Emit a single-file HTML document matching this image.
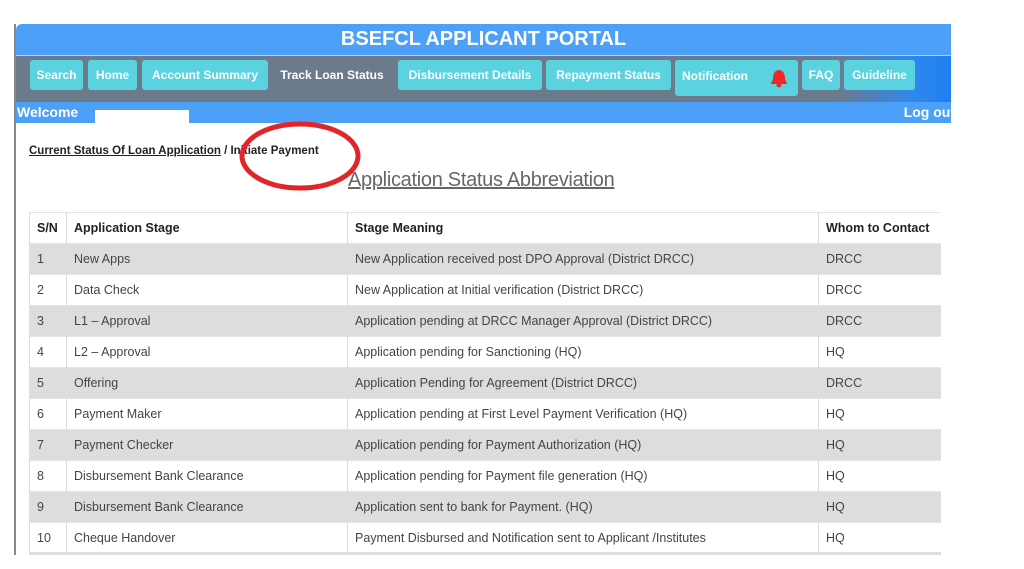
<!DOCTYPE html>
<html><head><meta charset="utf-8"><style>
*{margin:0;padding:0;box-sizing:border-box}
body{width:1024px;height:569px;background:#fff;position:relative;overflow:hidden;font-family:"Liberation Sans",Arial,sans-serif}
.a{position:absolute}
#lline{left:14px;top:24px;width:2px;height:531px;background:#888}
#hdr{left:16px;top:24px;width:935px;height:31px;background:#4da0f7;color:#fff;font:bold 20px "Liberation Sans",sans-serif;text-align:center;line-height:31px;border-top-left-radius:6px}
#nav{left:16px;top:55px;width:935px;height:47px;background:linear-gradient(90deg,#6c7b8c 0%,#6c7b8c 88%,#2f88ee 96%,#1f7ff0 100%);border-top:1px solid #ccd}
.b{position:absolute;top:60px;height:30px;background:#5ad2df;color:#fff;font:bold 12px "Liberation Sans",sans-serif;line-height:30px;text-align:center;border-radius:3px;white-space:nowrap}
#wel{left:16px;top:102px;width:935px;height:21px;background:#4da0f7;color:#fff;font:bold 14px "Liberation Sans",sans-serif;line-height:21px;padding-left:1px}
table{position:absolute;left:29px;top:212px;width:912px;border-collapse:collapse;font-size:12.5px;color:#444}
td,th{height:31px;padding:0 7px;text-align:left;border-left:1px solid #ddd;white-space:nowrap}
th{color:#222;font-size:12.5px}
tr:nth-child(even){background:#ddd}
tr{border-top:1px solid #e4e4e4}
</style></head><body>
<div class="a" id="lline"></div>
<div class="a" id="hdr">BSEFCL APPLICANT PORTAL</div>
<div class="a" id="nav"></div>
<div class="b" style="left:30px;width:53px">Search</div>
<div class="b" style="left:88px;width:49px">Home</div>
<div class="b" style="left:142px;width:126px">Account Summary</div>
<div class="b" style="left:272px;width:120px;background:none">Track Loan Status</div>
<div class="b" style="left:398px;width:144px">Disbursement Details</div>
<div class="b" style="left:546px;width:125px">Repayment Status</div>
<div class="b" style="left:675px;width:123px;height:36px;text-align:left;padding-left:7px;line-height:32px">Notification
<svg style="position:absolute;left:94px;top:8px" width="20" height="20" viewBox="0 0 20 20"><path d="M10 2C6 2 4 6 4 10C4 13 2 14 2 16H18C18 14 16 13 16 10C16 6 14 2 10 2Z" fill="#f02828"/><circle cx="10" cy="17" r="2.5" fill="#f02828"/></svg></div>
<div class="b" style="left:802px;width:38px">FAQ</div>
<div class="b" style="left:844px;width:71px">Guideline</div>
<div class="a" id="wel">Welcome<span style="position:absolute;left:79px;top:8px;width:94px;height:13px;background:#fff"></span><span style="position:absolute;right:-4px;top:0">Log out</span></div>
<div class="a" style="left:29px;top:145px;font:bold 11.5px 'Liberation Sans',sans-serif;color:#222"><u>Current Status Of Loan Application</u> / Initiate Payment</div>
<div class="a" style="left:348px;top:169px;font:20px 'Liberation Sans',sans-serif;color:#666;text-decoration:underline;letter-spacing:-0.3px">Application Status Abbreviation</div>
<svg class="a" style="left:238px;top:120px" width="130" height="74"><ellipse cx="62" cy="36" rx="58" ry="32" fill="none" stroke="#e0252b" stroke-width="5"/></svg>
<table>
<tr style="border-top:1px solid #e4e4e4"><th style="width:37px">S/N</th><th style="width:281px">Application Stage</th><th style="width:471px">Stage Meaning</th><th>Whom to Contact</th></tr>
<tr><td>1</td><td>New Apps</td><td>New Application received post DPO Approval (District DRCC)</td><td>DRCC</td></tr>
<tr><td>2</td><td>Data Check</td><td>New Application at Initial verification (District DRCC)</td><td>DRCC</td></tr>
<tr><td>3</td><td>L1 – Approval</td><td>Application pending at DRCC Manager Approval (District DRCC)</td><td>DRCC</td></tr>
<tr><td>4</td><td>L2 – Approval</td><td>Application pending for Sanctioning (HQ)</td><td>HQ</td></tr>
<tr><td>5</td><td>Offering</td><td>Application Pending for Agreement (District DRCC)</td><td>DRCC</td></tr>
<tr><td>6</td><td>Payment Maker</td><td>Application pending at First Level Payment Verification (HQ)</td><td>HQ</td></tr>
<tr><td>7</td><td>Payment Checker</td><td>Application pending for Payment Authorization (HQ)</td><td>HQ</td></tr>
<tr><td>8</td><td>Disbursement Bank Clearance</td><td>Application pending for Payment file generation (HQ)</td><td>HQ</td></tr>
<tr><td>9</td><td>Disbursement Bank Clearance</td><td>Application sent to bank for Payment. (HQ)</td><td>HQ</td></tr>
<tr style="border-bottom:3px solid #ddd"><td>10</td><td>Cheque Handover</td><td>Payment Disbursed and Notification sent to Applicant /Institutes</td><td>HQ</td></tr>
</table>
</body></html>
